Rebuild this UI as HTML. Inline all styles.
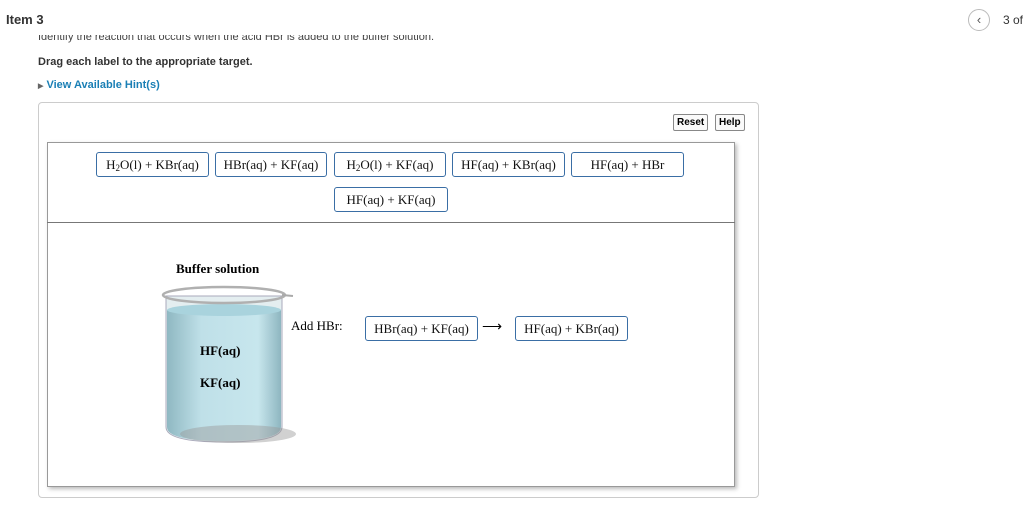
<html><head><style>
body{margin:0;width:1024px;height:506px;background:#fff;font-family:"Liberation Sans",Arial,sans-serif;position:relative;overflow:hidden}
.a{position:absolute}
.lb{position:absolute;height:25px;border:1px solid #3a6ea5;border-radius:3px;box-sizing:border-box;font-family:"Liberation Serif",serif;font-size:13px;line-height:23px;text-align:center;color:#111;background:#fff}
.btn{position:absolute;border:1px solid #888;border-radius:2px;font-size:10px;font-weight:bold;padding:2px 3px;background:#fafafa}
sub{font-size:9px;vertical-align:-2px;line-height:0}
</style></head><body>
<div class="a" style="left:6px;top:12px;font-size:13px;font-weight:bold;color:#333">Item 3</div>
<div class="a" style="left:968px;top:9px;width:22px;height:22px;border:1px solid #bbb;border-radius:50%;box-sizing:border-box;text-align:center;line-height:19px;font-size:13px;color:#555">&lsaquo;</div>
<div class="a" style="left:1003px;top:13px;font-size:12px;color:#333">3 of</div>
<div class="a" style="left:38px;top:35px;height:9px;overflow:hidden;font-size:11px;color:#444;line-height:4px">Identify the reaction that occurs when the acid HBr is added to the buffer solution.</div>
<div class="a" style="left:38px;top:56px;font-size:11px;font-weight:bold;color:#333">Drag each label to the appropriate target.</div>
<div class="a" style="left:38px;top:79px;font-size:11px;font-weight:bold;color:#1a7fb5"><span style="font-size:7px;color:#666">&#9654;</span> View Available Hint(s)</div>
<div class="a" style="left:38px;top:102px;width:721px;height:396px;border:1px solid #ccc;border-radius:4px;box-sizing:border-box"></div>
<div class="btn" style="left:673px;top:114px">Reset</div>
<div class="btn" style="left:715px;top:114px">Help</div>
<div class="a" style="left:47px;top:142px;width:688px;height:345px;border:1px solid #999;box-sizing:border-box;box-shadow:2px 2px 4px #bbb"></div>
<div class="a" style="left:47px;top:222px;width:688px;height:1px;background:#777"></div>
<div class="lb" style="left:96px;top:152px;width:113px">H<sub>2</sub>O(l) + KBr(aq)</div>
<div class="lb" style="left:215px;top:152px;width:112px">HBr(aq) + KF(aq)</div>
<div class="lb" style="left:334px;top:152px;width:112px">H<sub>2</sub>O(l) + KF(aq)</div>
<div class="lb" style="left:452px;top:152px;width:113px">HF(aq) + KBr(aq)</div>
<div class="lb" style="left:571px;top:152px;width:113px">HF(aq) + HBr</div>
<div class="lb" style="left:334px;top:187px;width:114px">HF(aq) + KF(aq)</div>
<div class="a" style="left:176px;top:261px;font-family:'Liberation Serif',serif;font-size:13px;font-weight:bold">Buffer solution</div>
<svg class="a" style="left:158px;top:282px" width="140" height="166">
<defs><linearGradient id="g" x1="0" x2="1"><stop offset="0" stop-color="#8fb8c2"/><stop offset=".3" stop-color="#bfe0e8"/><stop offset=".8" stop-color="#c7e6ed"/><stop offset="1" stop-color="#8eb6c0"/></linearGradient></defs>
<path d="M8 14 L8 145 Q8 160 66 160 Q124 160 124 145 L124 14 Z" fill="#e4eef0" stroke="#aab" stroke-width="1"/>
<path d="M9 28 L9 145 Q9 159 66 159 Q123 159 123 145 L123 28 Z" fill="url(#g)"/>
<ellipse cx="66" cy="28" rx="57" ry="6" fill="#a9d3dd"/>
<ellipse cx="66" cy="13" rx="61" ry="8" fill="none" stroke="#b0b0b0" stroke-width="2.5"/>
<path d="M124 13 L135 14" stroke="#aaa" stroke-width="2"/>
<ellipse cx="80" cy="152" rx="58" ry="9" fill="#999" opacity=".45"/>
</svg>
<div class="a" style="left:200px;top:343px;font-family:'Liberation Serif',serif;font-size:13px;font-weight:bold">HF(aq)</div>
<div class="a" style="left:200px;top:375px;font-family:'Liberation Serif',serif;font-size:13px;font-weight:bold">KF(aq)</div>
<div class="a" style="left:291px;top:318px;font-family:'Liberation Serif',serif;font-size:13px">Add HBr:</div>
<div class="lb" style="left:365px;top:316px;width:113px">HBr(aq) + KF(aq)</div>
<div class="a" style="left:482px;top:318px;font-size:14px">&#10230;</div>
<div class="lb" style="left:515px;top:316px;width:113px">HF(aq) + KBr(aq)</div>
</body></html>
